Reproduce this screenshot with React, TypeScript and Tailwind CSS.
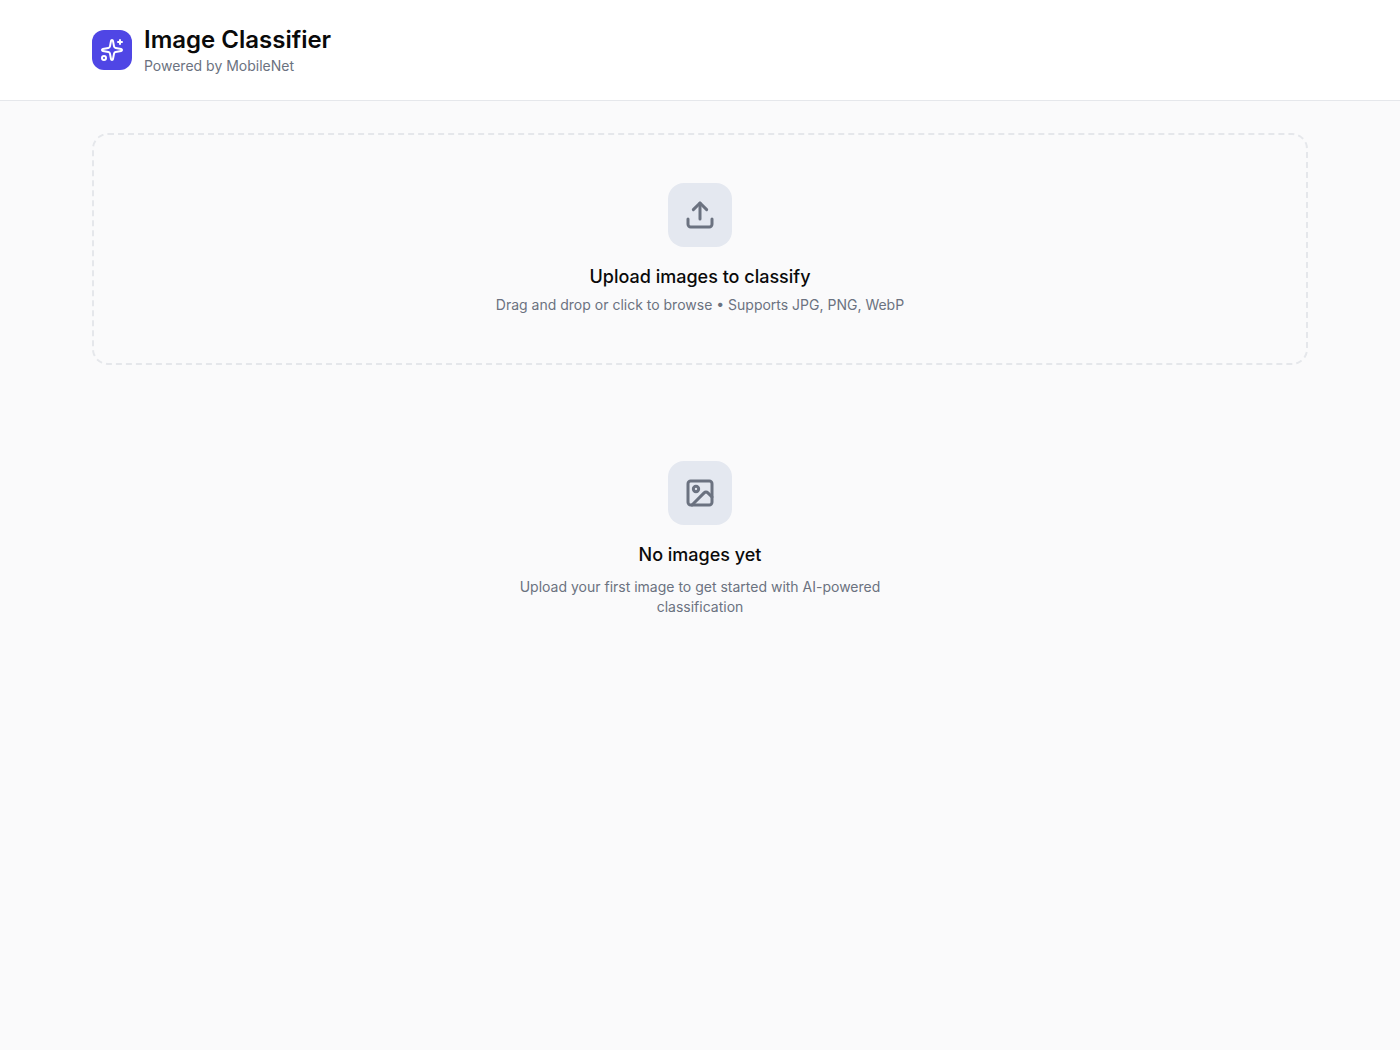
import { Sparkles, Upload, Image } from "lucide-react";

export default function App() {
  return (
    <div className="min-h-screen bg-[#fafafb] font-['Inter',sans-serif] antialiased">
      <header className="h-[101px] bg-white border-b border-[#e5e7eb] flex items-center">
        <div className="w-full max-w-[1216px] mx-auto flex items-center gap-3">
          <div className="w-10 h-10 rounded-xl bg-[#4f46e5] flex items-center justify-center">
            <Sparkles className="w-6 h-6 text-white" strokeWidth={2} />
          </div>
          <div>
            <h1 className="text-2xl font-semibold text-[#0a0a0a] leading-[32px]">Image Classifier</h1>
            <p className="text-sm text-[#6b7280] leading-5">Powered by MobileNet</p>
          </div>
        </div>
      </header>
      <main className="w-[1216px] mx-auto pt-8">
        <div className="h-[232px] rounded-2xl border-2 border-dashed border-[#e5e7eb] flex flex-col items-center pt-12">
          <div className="w-16 h-16 rounded-2xl bg-[#e4e8f0] flex items-center justify-center">
            <Upload className="w-8 h-8 text-[#6b7280]" strokeWidth={2.25} />
          </div>
          <h3 className="mt-4 text-lg font-medium text-[#0a0a0a] leading-7">Upload images to classify</h3>
          <p className="mt-1 text-sm text-[#6b7280] leading-5">Drag and drop or click to browse • Supports JPG, PNG, WebP</p>
        </div>
        <div className="mt-24 flex flex-col items-center">
          <div className="w-16 h-16 rounded-2xl bg-[#e4e8f0] flex items-center justify-center">
            <Image className="w-8 h-8 text-[#6b7280]" strokeWidth={2.25} />
          </div>
          <h3 className="mt-4 text-lg font-medium text-[#0a0a0a] leading-7">No images yet</h3>
          <p className="mt-2 w-[384px] text-center text-sm text-[#6b7280] leading-5">Upload your first image to get started with AI-powered classification</p>
        </div>
      </main>
    </div>
  );
}
